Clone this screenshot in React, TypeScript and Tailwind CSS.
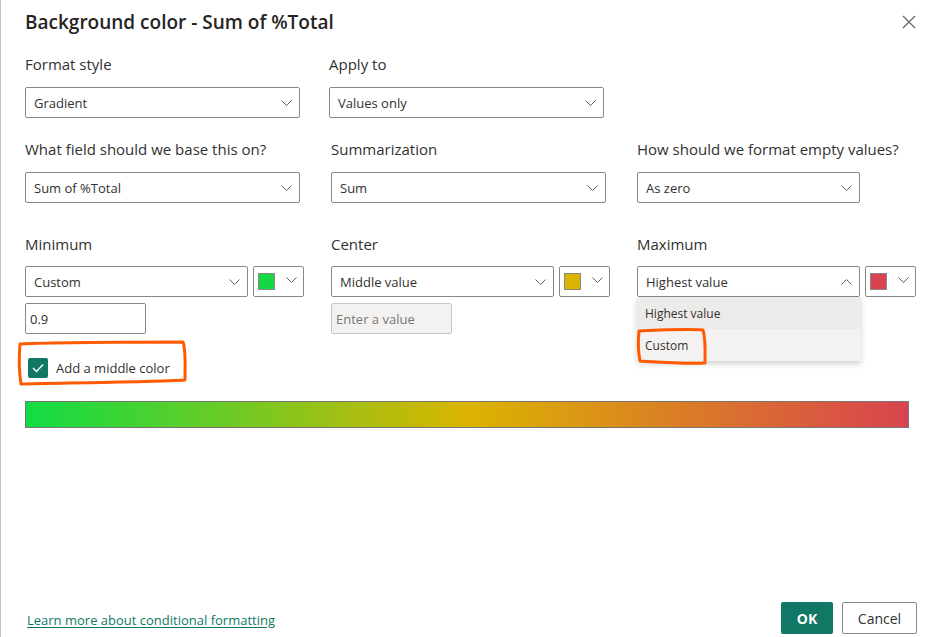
import React from "react";

const font = { fontFamily: '"Open Sans", "Noto Sans", sans-serif' };

function Chevron({ up = false }: { up?: boolean }) {
  return (
    <svg width="11" height="6" viewBox="0 0 11 6" className="shrink-0">
      <path
        d={up ? "M0.5 5.5 L5.5 0.5 L10.5 5.5" : "M0.5 0.5 L5.5 5.5 L10.5 0.5"}
        fill="none"
        stroke="#605e5c"
        strokeWidth="1"
      />
    </svg>
  );
}

function Dropdown({ value, width, up = false }: { value: string; width: string; up?: boolean }) {
  return (
    <div
      className={`${width} h-[31px] border border-[#8a8886] rounded-[2px] bg-white flex items-center justify-between pl-[8px] pr-[7px] text-[13px] text-[#323130]`}
    >
      <span className="pt-[2px]">{value}</span>
      <Chevron up={up} />
    </div>
  );
}

function ColorPicker({ color }: { color: string }) {
  return (
    <div className="relative w-[51px] h-[31px] border border-[#8a8886] rounded-[2px] bg-white">
      <div
        className="absolute left-[4px] top-[6px] w-[17px] h-[17px] border border-[#8a8886]"
        style={{ backgroundColor: color }}
      />
      <div className="absolute left-[32px] top-[10px]">
        <Chevron />
      </div>
    </div>
  );
}

function Label({ children }: { children: React.ReactNode }) {
  return <div className="text-[15px] leading-[20px] text-[#323130]">{children}</div>;
}

export default function App() {
  return (
    <div
      className="relative h-[637px] w-[926px] bg-white border-l border-[#c8c6c4] flex flex-col pl-[24px] overflow-hidden"
      style={font}
    >
      {/* header */}
      <div className="flex items-center justify-between pt-[8px] pr-[10px]">
        <h1 className="text-[19px] leading-[28px] font-semibold text-[#252423]">
          Background color - Sum of %Total
        </h1>
        <svg width="14" height="14" viewBox="0 0 14 14">
          <path d="M1 1 L13 13 M13 1 L1 13" stroke="#605e5c" strokeWidth="1.1" />
        </svg>
      </div>

      {/* row 1 */}
      <div className="flex gap-[29px] mt-[18px]">
        <div className="w-[275px]">
          <Label>Format style</Label>
          <div className="mt-[13px]">
            <Dropdown value="Gradient" width="w-[275px]" />
          </div>
        </div>
        <div className="w-[275px]">
          <Label>Apply to</Label>
          <div className="mt-[13px]">
            <Dropdown value="Values only" width="w-[275px]" />
          </div>
        </div>
      </div>

      {/* row 2 */}
      <div className="flex mt-[21px]">
        <div className="w-[306px]">
          <Label>What field should we base this on?</Label>
          <div className="mt-[13px]">
            <Dropdown value="Sum of %Total" width="w-[275px]" />
          </div>
        </div>
        <div className="w-[306px]">
          <Label>Summarization</Label>
          <div className="mt-[13px]">
            <Dropdown value="Sum" width="w-[275px]" />
          </div>
        </div>
        <div>
          <Label>How should we format empty values?</Label>
          <div className="mt-[13px]">
            <Dropdown value="As zero" width="w-[223px]" />
          </div>
        </div>
      </div>

      {/* row 3 */}
      <div className="flex mt-[31px]">
        <div className="w-[306px]">
          <Label>Minimum</Label>
          <div className="mt-[12px] flex gap-[5px]">
            <Dropdown value="Custom" width="w-[223px]" />
            <ColorPicker color="#13d843" />
          </div>
          <div className="mt-[6px] w-[121px] h-[31px] border border-[#8a8886] rounded-[2px] flex items-center px-[4px] pt-[2px] text-[13px] text-[#323130]">
            0.9
          </div>
        </div>
        <div className="w-[306px]">
          <Label>Center</Label>
          <div className="mt-[12px] flex gap-[5px]">
            <Dropdown value="Middle value" width="w-[223px]" />
            <ColorPicker color="#d9b400" />
          </div>
          <div className="mt-[6px] w-[121px] h-[31px] border border-[#c8c6c4] rounded-[2px] bg-[#f3f2f1] flex items-center px-[4px] pt-[2px] text-[13px] text-[#797775]">
            Enter a value
          </div>
        </div>
        <div>
          <Label>Maximum</Label>
          <div className="mt-[12px] flex gap-[5px]">
            <div className="relative">
              <Dropdown value="Highest value" width="w-[223px]" up />
              <div className="absolute left-0 top-full w-[224px] bg-[#f3f2f1] shadow-[0_3px_6px_rgba(0,0,0,0.18)] text-[12px] text-[#323130] z-10">
                <div className="h-[32px] flex items-center px-[8px] pt-[2px] bg-[#edebe9]">Highest value</div>
                <div className="h-[32px] flex items-center px-[8px] pt-[2px]">Custom</div>
              </div>
            </div>
            <ColorPicker color="#d9434f" />
          </div>
        </div>
      </div>

      {/* checkbox */}
      <div className="mt-[24px] ml-[3px] flex items-center gap-[8px]">
        <div className="w-[20px] h-[20px] rounded-[2px] bg-[#117865] flex items-center justify-center">
          <svg width="12" height="10" viewBox="0 0 12 10">
            <path d="M1 5 L4.5 8.5 L11 1.5" fill="none" stroke="white" strokeWidth="1.4" />
          </svg>
        </div>
        <span className="text-[13px] text-[#323130] pt-[1px]">Add a middle color</span>
      </div>

      {/* gradient */}
      <div className="mt-[22px] w-[884px] h-[27px] border border-[#797775] bg-[linear-gradient(to_right,#10dd44,#dbb400_50%,#d9434f)]" />

      {/* footer */}
      <div className="mt-auto pb-[3px] pr-[9px] flex items-end justify-between">
        <a className="mb-[4px] ml-[2px] text-[13px] text-[#117865] underline underline-offset-2">
          Learn more about conditional formatting
        </a>
        <div className="flex gap-[9px]">
          <button className="w-[52px] h-[32px] rounded-[2px] bg-[#117865] text-white text-[14px] font-bold">
            OK
          </button>
          <button className="w-[75px] h-[32px] rounded-[2px] border border-[#8a8886] bg-white text-[#323130] text-[14px]">
            Cancel
          </button>
        </div>
      </div>

      {/* hand-drawn annotations */}
      <svg className="absolute left-0 top-0 pointer-events-none z-20" width="926" height="637">
        <path
          d="M19 344 C60 342 140 342 182 342 C185 350 184 365 184 380 C150 382 60 383 20 384 C18 372 18 356 19 344"
          fill="none"
          stroke="#ff5a00"
          strokeWidth="3"
          strokeLinejoin="round"
          strokeLinecap="round"
        />
        <path
          d="M638 331 C660 330 688 329 702 330 C705 340 704 354 704 363 C682 364 656 362 639 361 C637 351 637 341 638 331"
          fill="none"
          stroke="#ff5a00"
          strokeWidth="3"
          strokeLinejoin="round"
          strokeLinecap="round"
        />
      </svg>
    </div>
  );
}
